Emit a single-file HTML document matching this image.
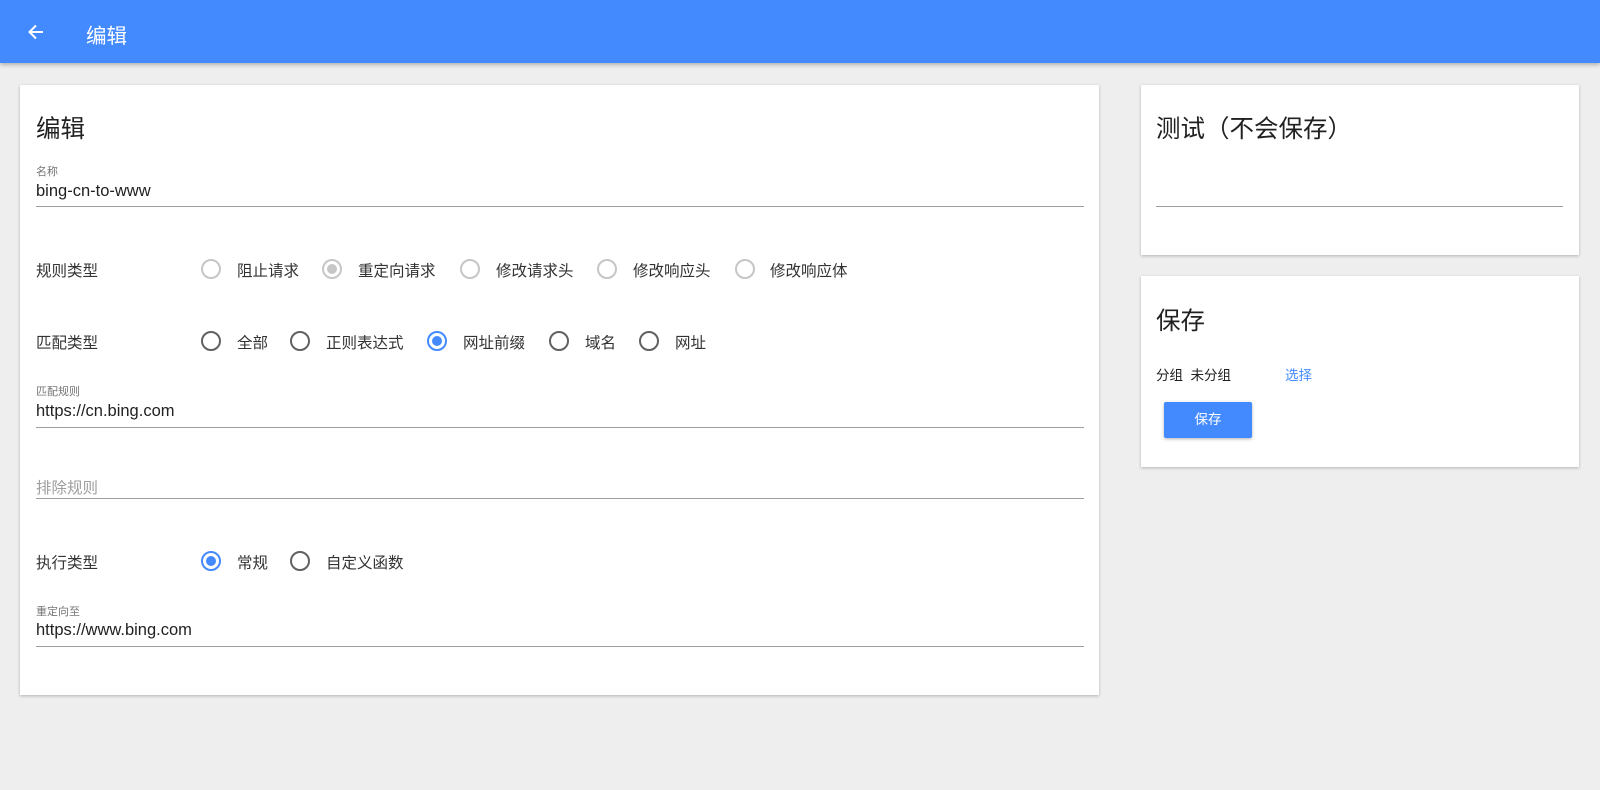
<!DOCTYPE html>
<html><head><meta charset="utf-8"><style>
*{box-sizing:border-box;margin:0;padding:0}
body{width:1600px;height:790px;background:#eeeeee;font-family:"Liberation Sans","Noto Sans CJK SC",sans-serif;color:#212121;position:relative;overflow:hidden}
.hdr{position:absolute;left:0;top:0;width:1600px;height:63px;background:#448aff;box-shadow:0 2px 4px rgba(0,0,0,.25)}
.hdr .t{position:absolute;left:86px;top:19px;color:#fff;font-size:20.5px}
.card{position:absolute;background:#fff;box-shadow:0 1px 3px rgba(0,0,0,.25)}
.abs{position:absolute;white-space:nowrap}
.lbl{font-size:11px;color:#757575}
.val{font-size:16.5px;color:#212121}
.line{position:absolute;height:1px;background:#9e9e9e}
.rad{position:absolute;width:20px;height:20px;border:2px solid #616161;border-radius:50%}
.rad.dis{border-color:#c6c6c6}
.rad.on{border-color:#448aff}
.rad.on::after,.rad.dison::after{content:"";position:absolute;left:3px;top:3px;width:10px;height:10px;border-radius:50%;background:#448aff}
.rad.dison{border-color:#c6c6c6}
.rad.dison::after{background:#c6c6c6}
.rt{font-size:15.5px;color:#333}
.h{font-size:24.5px}
</style></head><body>
<div class="hdr">
<svg style="position:absolute;left:27px;top:23px" width="18" height="18" viewBox="0 0 18 18"><path d="M16 9H3M9 2.5L2.5 9 9 15.5" stroke="#fff" stroke-width="2" fill="none"/></svg>
<div class="t">编辑</div></div>

<div class="card" style="left:20px;top:85px;width:1079px;height:610px"></div>
<div class="abs h" style="left:36px;top:110px">编辑</div>
<div class="abs lbl" style="left:36px;top:163px">名称</div>
<div class="abs val" style="left:36px;top:182px">bing-cn-to-www</div>
<div class="line" style="left:36px;top:206px;width:1048px"></div>

<div class="abs rt" style="left:36px;top:259px">规则类型</div>
<div class="rad dis" style="left:201px;top:259px"></div><div class="abs rt" style="left:237px;top:259px">阻止请求</div>
<div class="rad dison" style="left:322px;top:259px"></div><div class="abs rt" style="left:358px;top:259px">重定向请求</div>
<div class="rad dis" style="left:460px;top:259px"></div><div class="abs rt" style="left:496px;top:259px">修改请求头</div>
<div class="rad dis" style="left:597px;top:259px"></div><div class="abs rt" style="left:633px;top:259px">修改响应头</div>
<div class="rad dis" style="left:735px;top:259px"></div><div class="abs rt" style="left:770px;top:259px">修改响应体</div>

<div class="abs rt" style="left:36px;top:331px">匹配类型</div>
<div class="rad" style="left:201px;top:331px"></div><div class="abs rt" style="left:237px;top:331px">全部</div>
<div class="rad" style="left:290px;top:331px"></div><div class="abs rt" style="left:326px;top:331px">正则表达式</div>
<div class="rad on" style="left:427px;top:331px"></div><div class="abs rt" style="left:463px;top:331px">网址前缀</div>
<div class="rad" style="left:549px;top:331px"></div><div class="abs rt" style="left:585px;top:331px">域名</div>
<div class="rad" style="left:639px;top:331px"></div><div class="abs rt" style="left:675px;top:331px">网址</div>

<div class="abs lbl" style="left:36px;top:383px">匹配规则</div>
<div class="abs val" style="left:36px;top:402px">https://cn.bing.com</div>
<div class="line" style="left:36px;top:427px;width:1048px"></div>

<div class="abs" style="left:36px;top:476px;font-size:15.5px;color:#9e9e9e">排除规则</div>
<div class="line" style="left:36px;top:498px;width:1048px"></div>

<div class="abs rt" style="left:36px;top:551px">执行类型</div>
<div class="rad on" style="left:201px;top:551px"></div><div class="abs rt" style="left:237px;top:551px">常规</div>
<div class="rad" style="left:290px;top:551px"></div><div class="abs rt" style="left:326px;top:551px">自定义函数</div>

<div class="abs lbl" style="left:36px;top:603px">重定向至</div>
<div class="abs val" style="left:36px;top:621px">https://www.bing.com</div>
<div class="line" style="left:36px;top:646px;width:1048px"></div>

<div class="card" style="left:1141px;top:85px;width:438px;height:170px"></div>
<div class="abs h" style="left:1156px;top:110px">测试（不会保存）</div>
<div class="line" style="left:1156px;top:206px;width:407px"></div>

<div class="card" style="left:1141px;top:276px;width:438px;height:191px"></div>
<div class="abs h" style="left:1156px;top:302px">保存</div>
<div class="abs" style="left:1156px;top:364px;font-size:13.5px">分组&nbsp;&nbsp;未分组</div>
<div class="abs" style="left:1285px;top:364px;font-size:13.5px;color:#448aff">选择</div>
<div class="abs" style="left:1164px;top:402px;width:88px;height:36px;background:#448aff;border-radius:2px;box-shadow:0 1px 3px rgba(0,0,0,.3);color:#fff;font-size:13.5px;text-align:center;line-height:36px">保存</div>
</body></html>
